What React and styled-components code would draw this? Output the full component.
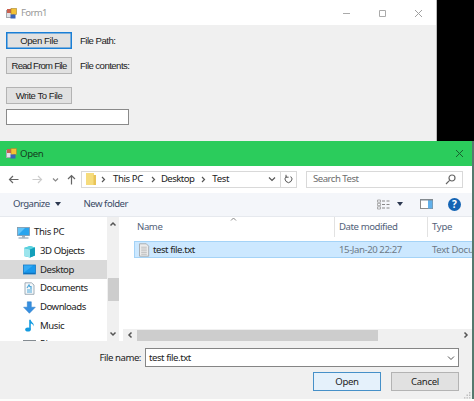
import React from 'react';
import styled, { createGlobalStyle } from 'styled-components';

const treeItems = [
  { name: 'This PC', icon: 'pc', root: true, ls: -0.35 },
  { name: '3D Objects', icon: 'cube', ls: -0.45 },
  { name: 'Desktop', icon: 'desktop', active: true, ls: -0.5 },
  { name: 'Documents', icon: 'docs', ls: -0.45 },
  { name: 'Downloads', icon: 'down', ls: -0.5 },
  { name: 'Music', icon: 'music', ls: -0.4 },
  { name: 'Pictures', icon: 'pics', ls: -0.4 },
];

const FormIcon = () => (
  <svg width="11" height="11" viewBox="0 0 11 11">
    <rect x="0.5" y="2.5" width="7" height="7" fill="#dfe3e8" stroke="#a5a9ae" />
    <rect x="1" y="1" width="4" height="4" fill="#c9604f" />
    <rect x="5" y="0.5" width="5.5" height="6" fill="#f3c136" stroke="#a8862d" strokeWidth="0.6" />
    <rect x="4.5" y="6.5" width="5" height="4" fill="#3b63b8" />
  </svg>
);

const Stroke = ({ d, w = 9, h = 9, color = '#555', sw = 1.2 }) => (
  <svg width={w} height={h} viewBox={`0 0 ${w} ${h}`} fill="none" stroke={color} strokeWidth={sw}>
    <path d={d} />
  </svg>
);

const TreeIcon = ({ type }) => (
  <svg width="13" height="13" viewBox="0 0 13 13">
    {type === 'pc' && (
      <>
        <rect x="0.5" y="1.5" width="12" height="8" fill="#2aa5ee" stroke="#8298aa" strokeWidth="0.8" />
        <path d="M1 9V2h7z" fill="#62c4f8" />
        <path d="M5 10h3v1.5H5z" fill="#a4b0bb" />
        <path d="M1.5 12h10" stroke="#7d93a5" />
      </>
    )}
    {type === 'cube' && (
      <>
        <path d="M1 3l6-2 5 1.5v8L7 12.5 1 11z" fill="#25b7cc" />
        <path d="M1 3l6 1.5v8L1 11z" fill="#9ce5ed" />
        <path d="M1 3l6-2 5 1.5-5 2z" fill="#5ed3df" />
        <path d="M7 4.5l5-2v8l-5 2z" fill="#139fba" />
      </>
    )}
    {type === 'desktop' && (
      <>
        <rect x="0.5" y="2" width="12" height="9" fill="#1998ec" stroke="#1679c4" strokeWidth="0.8" />
        <path d="M1 9.5V2.5h9z" fill="#35aaf4" />
        <path d="M1 10.3h11" stroke="#0d62a8" strokeWidth="0.8" />
      </>
    )}
    {type === 'docs' && (
      <>
        <path d="M2 0.8h6.5L11 3v9.3H2z" fill="#f4f8fb" stroke="#8b9aa6" strokeWidth="0.8" />
        <path d="M4 6l2-3 1 2M4 8h5M4 10h5M8 4v3" stroke="#4ca5d8" strokeWidth="1.2" fill="none" />
      </>
    )}
    {type === 'down' && (
      <path d="M4.3 0.8h4v5.4h4L6.4 12.3 0.6 6.2h3.7z" fill="#378fe0" stroke="#2478c4" strokeWidth="0.5" />
    )}
    {type === 'music' && (
      <>
        <ellipse cx="5" cy="10.4" rx="2.8" ry="2" fill="#149be0" />
        <path d="M6.2 10.5V0.8h1.6c0 2.6 3.6 3 3 6.6-.5-2-1.6-2.6-3-3v6z" fill="#149be0" />
      </>
    )}
    {type === 'pics' && (
      <rect x="0.5" y="2.5" width="12" height="9" fill="#fff" stroke="#848b91" />
    )}
  </svg>
);

const FolderIcon = () => (
  <svg width="12" height="14" viewBox="0 0 12 14">
    <path d="M1 1h8v2h2v10H1z" fill="#f6dc7d" />
    <path d="M8.5 3H11v10H8.5z" fill="#e9c458" />
  </svg>
);

const FileIcon = () => (
  <svg width="12" height="14" viewBox="0 0 12 14">
    <path d="M1.5 0.8h6.8l2.4 2.4v10H1.5z" fill="#ececec" stroke="#a4a8ab" strokeWidth="0.9" />
    <path d="M3.2 4.2h5.6M3.2 6h5.6M3.2 7.8h5.6M3.2 9.6h5.6M3.2 11.3h5.6" stroke="#b5b5b5" strokeWidth="0.8" />
  </svg>
);

const App = () => (
  <>
    <GlobalStyle />
    <Screen>
      <TopArea>
        <FormWindow>
          <FormTitle>
            <FormIcon />
            <FormName>Form1</FormName>
            <WindowButtons>
              <Stroke d="M1 4.5h7" color="#aaa" sw={1} />
              <Stroke d="M1.5 1.5h6v6h-6z" color="#aaa" sw={1} />
              <Stroke d="M1 1l7 7M8 1l-7 7" color="#a0a0a0" sw={1} />
            </WindowButtons>
          </FormTitle>
          <FormBody>
            <FormRow $gap={8}>
              <FormButton $focused $ls={-0.4}>Open File</FormButton>
              <FormLabel $ls={-0.5}>File Path:</FormLabel>
            </FormRow>
            <FormRow $gap={13}>
              <FormButton $ls={-0.75}>Read From File</FormButton>
              <FormLabel $ls={-0.55}>File contents:</FormLabel>
            </FormRow>
            <FormRow $gap={5}>
              <FormButton $ls={-0.45}>Write To File</FormButton>
            </FormRow>
            <FormInput />
          </FormBody>
        </FormWindow>
      </TopArea>
      <DialogArea>
        <Dialog>
          <DialogTitle>
            <FormIcon />
            <Txt $ls={-0.35}>Open</Txt>
            <Stroke d="M1 1l7 7M8 1l-7 7" color="#17612f" sw={1} />
          </DialogTitle>
          <NavBar>
            <NavArrows>
              <Stroke w={11} d="M10.5 4.5H1.5M5 1L1.5 4.5 5 8" color="#666" />
              <Stroke w={11} d="M0.5 4.5h9M6 1l3.5 3.5L6 8" color="#ccc" />
              <Stroke w={7} h={6} d="M1 1.5L3.5 4 6 1.5" color="#888" />
              <Stroke w={9} h={11} d="M4.5 10.5V1.5M1 5l3.5-3.5L8 5" color="#666" />
            </NavArrows>
            <AddressBar>
              <FolderIcon />
              <Crumb $gap={4}><Stroke w={5} h={7} d="M1 1l2.5 2.5L1 6" /></Crumb>
              <Crumb $gap={7}><Txt $ls={-0.4}>This PC</Txt></Crumb>
              <Crumb $gap={8}><Stroke w={5} h={7} d="M1 1l2.5 2.5L1 6" /></Crumb>
              <Crumb $gap={5}><Txt $ls={-0.55}>Desktop</Txt></Crumb>
              <Crumb $gap={7}><Stroke w={5} h={7} d="M1 1l2.5 2.5L1 6" /></Crumb>
              <Crumb $gap={6}><Txt $ls={-0.35}>Test</Txt></Crumb>
              <AddressEnd>
                <Stroke w={8} h={6} d="M1 1.5L4 4.5 7 1.5" />
                <Refresh>
                  <Stroke w={9} h={10} d="M2.3 2.5A3.4 3.4 0 1 0 6.7 2.5M2 0.8v2.4h2.6" sw={1} />
                </Refresh>
              </AddressEnd>
            </AddressBar>
            <SearchBox>
              <Txt $ls={-0.5}>Search Test</Txt>
              <Stroke w={11} h={11} d="M1 10l3.8-3.8M10 4a3 3 0 1 1-6 0a3 3 0 1 1 6 0" color="#666" />
            </SearchBox>
          </NavBar>
          <Toolbar>
            <Txt $ls={-0.55}>Organize</Txt>
            <Caret $m={5} />
            <NewFolder $ls={-0.5}>New folder</NewFolder>
            <ToolIcons>
              <svg width="13" height="11" viewBox="0 0 13 11">
                <path d="M0.5 1h3v2.2h-3zM0.5 4.4h3v2.2h-3zM0.5 7.8h3V10h-3z" fill="none" stroke="#999" strokeWidth="0.8" />
                <path d="M5 2h3M9.5 2h3M5 5.5h3M9.5 5.5h3M5 9h3M9.5 9h3" stroke="#888" />
              </svg>
              <Caret $m={7} />
              <svg width="13" height="10" viewBox="0 0 13 10">
                <rect x="0.5" y="0.5" width="12" height="9" fill="#fff" stroke="#8a8a8a" />
                <rect x="8" y="1" width="4.5" height="8.5" fill="#61b0ea" />
                <path d="M0 1h13" stroke="#7c8a95" />
              </svg>
              <Help>?</Help>
            </ToolIcons>
          </Toolbar>
          <Browser>
            <Tree>
              {treeItems.map((item) => (
                <TreeRow key={item.name} $root={item.root} $active={item.active}>
                  <TreeIcon type={item.icon} />
                  <Txt $ls={item.ls}>{item.name}</Txt>
                </TreeRow>
              ))}
            </Tree>
            <VScroll>
              <Stroke w={8} h={6} d="M1.5 4.5L4 2l2.5 2.5" sw={1.5} />
              <VThumb />
              <Stroke w={8} h={6} d="M1.5 1.5L4 4l2.5-2.5" sw={1.5} />
            </VScroll>
            <Files>
              <SortMark><Stroke w={7} h={4} d="M1 3.5l2.5-2.5L6 3.5" color="#888" sw={1} /></SortMark>
              <FileHead>
                <HeadCell><Txt $ls={-0.4}>Name</Txt></HeadCell>
                <HeadCell $line><Txt $ls={-0.42}>Date modified</Txt></HeadCell>
                <HeadCell $line><Txt $ls={-0.3}>Type</Txt></HeadCell>
              </FileHead>
              <FileRow>
                <FileName><FileIcon /><Txt $ls={-0.45}>test file.txt</Txt></FileName>
                <FileCell><Txt $ls={-0.42}>15-Jan-20 22:27</Txt></FileCell>
                <FileCell><Txt $ls={-0.3}>Text Document</Txt></FileCell>
              </FileRow>
              <HScroll>
                <Stroke w={6} h={8} d="M4.5 1.5L2 4l2.5 2.5" sw={1.5} />
                <HThumb />
                <Stroke w={6} h={8} d="M1.5 1.5L4 4 1.5 6.5" sw={1.5} />
              </HScroll>
            </Files>
          </Browser>
          <Footer>
            <NameRow>
              <Txt $ls={-0.45}>File name:</Txt>
              <NameInput>
                <Txt $ls={-0.45}>test file.txt</Txt>
                <Stroke w={8} h={6} d="M1 1.5L4 4.5 7 1.5" sw={1} />
              </NameInput>
            </NameRow>
            <Actions>
              <DialogButton $primary><Txt $ls={-0.35}>Open</Txt></DialogButton>
              <DialogButton><Txt $ls={-0.3}>Cancel</Txt></DialogButton>
            </Actions>
            <Grip>
              <svg width="7" height="7" viewBox="0 0 7 7" fill="#bbb">
                <path d="M5 0h1.4v1.4H5zM5 2.6h1.4V4H5zM5 5.2h1.4v1.4H5zM2.5 2.6h1.4V4H2.5zM2.5 5.2h1.4v1.4H2.5zM0 5.2h1.4v1.4H0z" />
              </svg>
            </Grip>
          </Footer>
        </Dialog>
      </DialogArea>
    </Screen>
  </>
);

const GlobalStyle = createGlobalStyle`
  * { box-sizing: border-box; }
  body { margin: 0; background: #fff; overflow: hidden; }
  svg { display: block; flex: none; }
`;

const Screen = styled.div`
  width: 474px;
  height: 401px;
  overflow: hidden;
  background: #fdfdfb;
  font-family: 'Noto Sans', 'Open Sans', sans-serif;
  font-size: 9.6px;
  line-height: 14px;
  color: #222;
`;

const Txt = styled.span`
  white-space: nowrap;
  letter-spacing: ${(p) => p.$ls}px;
`;

const TopArea = styled.div`
  height: 141px;
  background: #000;
`;

const FormWindow = styled.div`
  width: 437px;
  height: 141px;
  background: #f0f0f0;
  border-right: 1px solid #bbb;
`;

const FormTitle = styled.div`
  display: flex;
  align-items: center;
  height: 25px;
  padding: 1px 13px 0 6px;
  background: #fff;
`;

const FormName = styled.span`
  margin-left: 4px;
  color: #999;
  letter-spacing: -0.7px;
`;

const WindowButtons = styled.div`
  display: flex;
  gap: 27px;
  margin-left: auto;
`;

const FormBody = styled.div`
  padding: 7px 6px;
  font-family: 'Liberation Sans', sans-serif;
`;

const FormRow = styled.div`
  display: flex;
  align-items: center;
  height: 17px;
  margin-bottom: ${(p) => p.$gap}px;
`;

const FormButton = styled.button`
  width: 66px;
  height: 17px;
  padding: 0;
  border: ${(p) => (p.$focused ? '1.5px solid #1a7fd6' : '1px solid #b3b3b3')};
  box-shadow: ${(p) => (p.$focused ? 'inset 0 0 0 0.5px #1a7fd6' : 'none')};
  background: #e1e1e1;
  color: #222;
  font: 9.5px/14px 'Liberation Sans', sans-serif;
  letter-spacing: ${(p) => p.$ls}px;
  white-space: nowrap;
`;

const FormLabel = styled.span`
  margin-left: 8px;
  font-size: 9.6px;
  letter-spacing: ${(p) => p.$ls}px;
`;

const FormInput = styled.input`
  display: block;
  width: 123px;
  height: 16px;
  border: 1px solid #8a8a8a;
  background: #fff;
`;

const DialogArea = styled.div`
  height: 258px;
  background: #55796e;
`;

const Dialog = styled.div`
  width: 472px;
  height: 258px;
  background: #fff;
`;

const DialogTitle = styled.div`
  display: flex;
  align-items: center;
  gap: 3px;
  height: 25px;
  padding: 0 8px 0 6px;
  background: #2bcc5c;
  color: #143d20;

  > svg:last-child { margin-left: auto; }
`;

const NavBar = styled.div`
  display: flex;
  align-items: center;
  height: 27px;
  padding-left: 8px;
`;

const NavArrows = styled.div`
  display: flex;
  align-items: center;
  width: 73px;

  svg:nth-child(2) { margin-left: 13px; }
  svg:nth-child(3) { margin-left: 9px; }
  svg:nth-child(4) { margin-left: 8px; }
`;

const AddressBar = styled.div`
  display: flex;
  align-items: center;
  width: 216px;
  height: 17px;
  margin-top: -1px;
  padding-left: 3px;
  border: 1px solid #d9d9d9;
`;

const Crumb = styled.span`
  display: flex;
  margin-left: ${(p) => p.$gap}px;
`;

const AddressEnd = styled.div`
  display: flex;
  align-items: center;
  gap: 4px;
  margin-left: auto;
`;

const Refresh = styled.div`
  display: flex;
  align-items: center;
  justify-content: center;
  width: 16px;
  height: 15px;
  border-left: 1px solid #d9d9d9;
`;

const SearchBox = styled.div`
  display: flex;
  align-items: center;
  justify-content: space-between;
  width: 157px;
  height: 17px;
  margin: -1px 0 0 9px;
  padding: 0 6px;
  border: 1px solid #d9d9d9;
  color: #6d6d6d;
`;

const Toolbar = styled.div`
  display: flex;
  align-items: center;
  height: 24px;
  padding: 0 11px 1px 13px;
  background: #f4f6fa;
  border-bottom: 1px solid #e6e9ee;
  color: #3a4a66;
`;

const Caret = styled.span`
  margin-left: ${(p) => p.$m}px;
  border: 3px solid transparent;
  border-top: 4px solid #2c3850;
  border-bottom: 0;
`;

const NewFolder = styled(Txt)`
  margin-left: 23px;
`;

const ToolIcons = styled.div`
  display: flex;
  align-items: center;
  margin-left: auto;

  svg:nth-child(3) { margin-left: 17px; }
`;

const Help = styled.span`
  width: 13px;
  height: 13px;
  margin-left: 15px;
  border-radius: 50%;
  background: #1464b4;
  color: #fff;
  font-size: 10px;
  font-weight: 700;
  line-height: 13px;
  text-align: center;
`;

const Browser = styled.div`
  display: flex;
  height: 124px;
`;

const Tree = styled.div`
  width: 107px;
  height: 124px;
  padding-top: 6px;
  overflow: hidden;
`;

const TreeRow = styled.div`
  display: flex;
  align-items: center;
  gap: 4px;
  height: 18.7px;
  padding-left: ${(p) => (p.$root ? 17 : 23)}px;
  background: ${(p) => (p.$active ? '#d9d9d9' : 'transparent')};
`;

const VScroll = styled.div`
  display: flex;
  flex-direction: column;
  align-items: center;
  justify-content: space-between;
  width: 12px;
  padding: 4px 0;
  background: #f0f0f0;
`;

const VThumb = styled.div`
  width: 11px;
  height: 23px;
  margin-top: 21px;
  background: #cdcdcd;
`;

const Files = styled.div`
  display: flex;
  flex-direction: column;
  position: relative;
  width: 353px;
  padding-left: 4px;
`;

const SortMark = styled.div`
  position: absolute;
  left: 111px;
  top: 0;
`;

const FileHead = styled.div`
  display: grid;
  grid-template-columns: 200px 93px 45px;
  height: 20px;
  margin-left: 11px;
  color: #53627a;
`;

const HeadCell = styled.div`
  padding: 3px 0 0 ${(p) => (p.$line ? 4 : 3)}px;
  border-left: ${(p) => (p.$line ? '1px solid #e2e2e2' : 'none')};
`;

const FileRow = styled.div`
  display: grid;
  grid-template-columns: 199px 93px 45px;
  align-items: center;
  height: 17px;
  margin: 4px 0 0 11px;
  border: 1px solid #a4d3f7;
  border-right: 0;
  background: #cce8ff;
  overflow: hidden;
`;

const FileName = styled.div`
  display: flex;
  align-items: center;
  gap: 3px;
  padding-left: 3px;
`;

const FileCell = styled.div`
  padding-left: 5px;
  overflow: hidden;
  color: #6d7986;
`;

const HScroll = styled.div`
  display: flex;
  align-items: center;
  height: 12px;
  margin-top: auto;
  padding: 0 3px 0 4px;
  background: #f0f0f0;

  > svg:last-child { margin-left: auto; }
`;

const HThumb = styled.div`
  width: 241px;
  height: 11px;
  margin-left: 4px;
  background: #cdcdcd;
`;

const Footer = styled.div`
  position: relative;
  height: 58px;
  padding-top: 7px;
  background: #f0f0f0;
`;

const NameRow = styled.div`
  display: flex;
  align-items: center;
  justify-content: flex-end;
  gap: 4px;
  height: 19px;
  padding-right: 13px;
`;

const NameInput = styled.div`
  display: flex;
  align-items: center;
  justify-content: space-between;
  width: 314px;
  height: 19px;
  padding: 0 3px;
  border: 1px solid #858585;
  background: #fff;
`;

const Actions = styled.div`
  display: flex;
  justify-content: flex-end;
  gap: 10px;
  margin-top: 5px;
  padding-right: 13px;
`;

const DialogButton = styled.button`
  width: 68px;
  height: 19px;
  padding: 0;
  border: 1px solid ${(p) => (p.$primary ? '#4690c8' : '#b3b3b3')};
  background: ${(p) => (p.$primary ? '#e5f1fb' : '#e1e1e1')};
  color: #222;
  font: inherit;
`;

const Grip = styled.div`
  position: absolute;
  right: 1px;
  bottom: 0;
`;

export default App;
